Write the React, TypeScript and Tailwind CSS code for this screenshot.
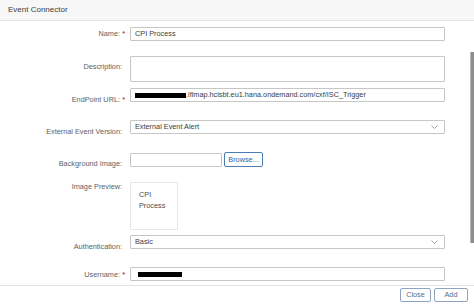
import React from 'react';

// Champ texte simple (lecture seule, rendu statique)
const Field: React.FC<{ className?: string; children?: React.ReactNode }> = ({ className = 'h-[14px] w-[315px]', children }) => (
  <div className={`${className} flex items-center border border-[#c6c6c6] bg-white pl-[4px] text-[7.3px] text-[#3a3d40] rounded-[1px]`}>
    {children}
  </div>
);

const Chevron = () => (
  <svg width="7" height="4" viewBox="0 0 7 4" className="mr-[6px]">
    <path d="M0.5 0.5 L3.5 3.5 L6.5 0.5" fill="none" stroke="#8a8d90" strokeWidth="0.8" />
  </svg>
);

const Row: React.FC<{
  label: string;
  required?: boolean;
  mt: string;
  pt: string;
  children: React.ReactNode;
}> = ({ label, required, mt, pt, children }) => (
  <div className={`flex items-start ${mt}`}>
    <div
      className={`w-[130px] flex justify-end text-[7.3px] leading-[9px] text-[#5e6164] ${pt} ${required ? 'pr-[5px]' : 'pr-[8px]'}`}
    >
      <span>{label}</span>
      {required && <span className="w-[5px] text-right text-[#bb0000]">*</span>}
    </div>
    {children}
  </div>
);

export default function App() {
  return (
    <div className="w-[474px] h-[307px] bg-white flex flex-col overflow-hidden" style={{ fontFamily: '"Liberation Sans", Arial, sans-serif' }}>
      {/* Header */}
      <div className="h-[21px] shrink-0 bg-[#f7f7f7] border-b border-[#e3e3e3] flex items-center px-[8px] text-[8px] text-[#3a3d40]">
        Event Connector
      </div>

      {/* Body */}
      <div className="h-[264px] shrink-0 flex">
        <div className="flex-1 flex flex-col">
          <Row label="Name:" required mt="mt-[6px]" pt="pt-[2px]">
            <Field>CPI Process</Field>
          </Row>
          <Row label="Description:" mt="mt-[15px]" pt="pt-[6px]">
            <Field className="h-[26px] w-[315px]" />
          </Row>
          <Row label="EndPoint URL:" required mt="mt-[6px]" pt="pt-[7px]">
            <Field>
              <span className="inline-block w-[51px] h-[5px] bg-black" />
              <span>.iflmap.hcisbt.eu1.hana.ondemand.com/cxf/ISC_Trigger</span>
            </Field>
          </Row>
          <Row label="External Event Version:" mt="mt-[16px]" pt="pt-[7px]">
            <Field>
              <span className="flex-1">External Event Alert</span>
              <Chevron />
            </Field>
          </Row>
          <Row label="Background Image:" mt="mt-[16px]" pt="pt-[7px]">
            <div className="flex items-center gap-[2px]">
              <Field className="h-[14px] w-[92px]" />
              <button className="h-[15px] w-[39px] border border-[#4a7db3] rounded-[2px] bg-white text-[7.3px] text-[#2f64a0] leading-none">
                Browse...
              </button>
            </div>
          </Row>
          <Row label="Image Preview:" mt="mt-[14px]" pt="pt-[0px]">
            <div className="w-[48px] h-[48px] border border-[#e6e6e6] pl-[8px] pt-[6px] text-[7.3px] leading-[11px] text-[#4a4d50]">
              <div>CPI</div>
              <div>Process</div>
            </div>
          </Row>
          <Row label="Authentication:" mt="mt-[5px]" pt="pt-[7px]">
            <Field>
              <span className="flex-1">Basic</span>
              <Chevron />
            </Field>
          </Row>
          <Row label="Username:" required mt="mt-[16px]" pt="pt-[3px]">
            <Field>
              <span className="inline-block ml-[3px] w-[44px] h-[5px] bg-black" />
            </Field>
          </Row>
        </div>
        {/* Scrollbar */}
        <div className="w-[4px] shrink-0">
          <div className="mt-[31px] h-[191px] bg-[#8e8e8e] border-l border-[#b5b5b5]" />
        </div>
      </div>

      {/* Footer */}
      <div className="flex-1 border-t border-[#e3e3e3] flex justify-end items-start gap-[3px] pt-[2px] pr-[6px]">
        <button className="h-[14px] w-[31px] border border-[#8ea5bf] rounded-[2px] bg-white text-[7.3px] text-[#5d6d7e] leading-none">
          Close
        </button>
        <button className="h-[14px] w-[34px] border border-[#8ea5bf] rounded-[2px] bg-white text-[7.3px] text-[#5d6d7e] leading-none">
          Add
        </button>
      </div>
    </div>
  );
}
